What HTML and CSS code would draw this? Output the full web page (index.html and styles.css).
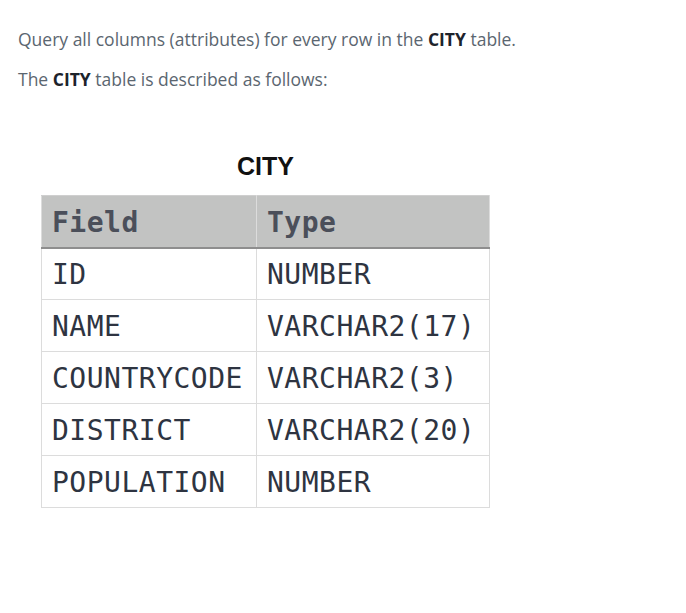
FILE: index.html
```html
<!DOCTYPE html>
<html>
<head>
<meta charset="utf-8">
<link rel="stylesheet" href="styles.css">
</head>
<body>
<div class="page">
  <p class="text">Query all columns (attributes) for every row in the <strong>CITY</strong> table.</p>
  <p class="text">The <strong>CITY</strong> table is described as follows:</p>
  <div class="figure">
    <div class="caption">CITY</div>
    <table class="schema">
      <thead>
        <tr><th class="c1">Field</th><th class="c2">Type</th></tr>
      </thead>
      <tbody>
        <tr><td>ID</td><td>NUMBER</td></tr>
        <tr><td>NAME</td><td>VARCHAR2(17)</td></tr>
        <tr><td>COUNTRYCODE</td><td>VARCHAR2(3)</td></tr>
        <tr><td>DISTRICT</td><td>VARCHAR2(20)</td></tr>
        <tr><td>POPULATION</td><td>NUMBER</td></tr>
      </tbody>
    </table>
  </div>
</div>
</body>
</html>
```
FILE: styles.css
```css
html, body {
  margin: 0;
  padding: 0;
  background: #ffffff;
}
.page {
  padding: 27px 18px 0 18px;
}
.text {
  margin: 0 0 15px 0;
  font-family: "Open Sans", sans-serif;
  font-size: 17.5px;
  line-height: 25px;
  color: #5b6670;
}
.text strong {
  font-weight: 700;
  color: #1d232b;
}
.figure {
  margin: 59px 0 0 23px;
  width: 449px;
}
.caption {
  font-family: "Liberation Sans", Arial, sans-serif;
  font-weight: 700;
  font-size: 25px;
  line-height: 30px;
  color: #111111;
  text-align: center;
  margin-bottom: 14px;
}
.schema {
  border-collapse: collapse;
  width: 449px;
  table-layout: fixed;
  font-family: "DejaVu Sans Mono", monospace;
  font-size: 28px;
  letter-spacing: 0.5px;
}
.schema .c1 { width: 215px; }
.schema th, .schema td {
  border: 1px solid #dcdcdc;
  padding: 2px 0 0 10px;
  text-align: left;
  white-space: nowrap;
  box-sizing: border-box;
}
.schema th {
  height: 52px;
  background: #c2c3c2;
  color: #4b4f5a;
  font-weight: 700;
  border-top-color: #cfcfcf;
  border-bottom: 2px solid #8e8e8e;
}
.schema td {
  height: 52px;
  color: #2e3441;
  font-weight: 400;
}
```
